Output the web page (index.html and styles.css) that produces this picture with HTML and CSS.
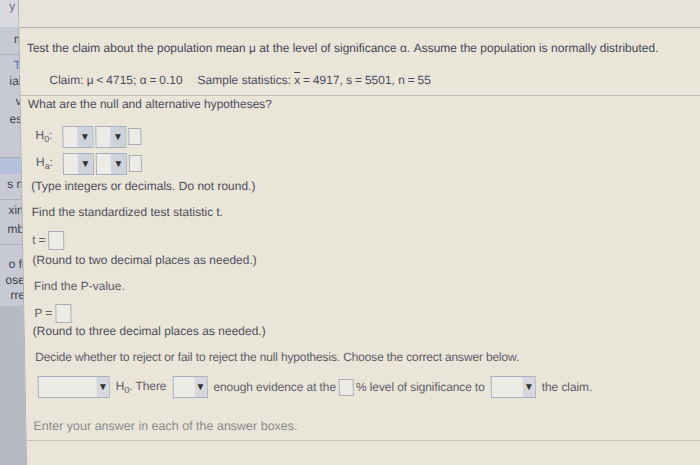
FILE: index.html
```html
<!DOCTYPE html>
<html>
<head>
<meta charset="utf-8">
<link rel="stylesheet" href="styles.css">
</head>
<body>
<div class="screen">
  <aside class="side">
    <div class="s-top">y</div>
    <div class="s-item s-a">n</div>
    <div class="s-item s-b">T</div>
    <div class="s-item s-c">ial</div>
    <div class="s-item s-d">v</div>
    <div class="s-item s-e">es</div>
    <div class="s-blue"></div>
    <div class="s-item s-f">s n</div>
    <div class="s-item s-g">xin</div>
    <div class="s-item s-h">mb</div>
    <div class="s-item s-i">o fi</div>
    <div class="s-item s-j">ose</div>
    <div class="s-item s-k">rre</div>
    <div class="s-rest"></div>
  </aside>
  <main class="main">
    <div class="topband"></div>
    <header class="qhead">
      <p class="title">Test the claim about the population mean μ at the level of significance α. Assume the population is normally distributed.</p>
      <p class="claim">Claim: μ<span class="op">&lt;</span>4715; α<span class="op">=</span>0.10<span class="gap"></span>Sample statistics: <span class="xbar">x</span><span class="op">=</span>4917, s<span class="op">=</span>5501, n<span class="op">=</span>55</p>
    </header>
    <section class="qbody">
      <p class="line l-what">What are the null and alternative hypotheses?</p>
      <div class="hyp h0">
        <span class="hlabel">H<sub>0</sub>:</span>
        <span class="sel sel-s"><span class="arr">▼</span></span>
        <span class="sel sel-s"><span class="arr">▼</span></span>
        <span class="inp"></span>
      </div>
      <div class="hyp ha">
        <span class="hlabel">H<sub>a</sub>:</span>
        <span class="sel sel-s"><span class="arr">▼</span></span>
        <span class="sel sel-s"><span class="arr">▼</span></span>
        <span class="inp"></span>
      </div>
      <p class="line l-type">(Type integers or decimals. Do not round.)</p>
      <p class="line l-find">Find the standardized test statistic t.</p>
      <div class="eq l-t"><span>t<span class="op">=</span></span><span class="inp inp-eq"></span></div>
      <p class="line l-r2">(Round to two decimal places as needed.)</p>
      <p class="line l-fp">Find the P-value.</p>
      <div class="eq l-p"><span>P<span class="op">=</span></span><span class="inp inp-eq"></span></div>
      <p class="line l-r3">(Round to three decimal places as needed.)</p>
      <p class="line l-dec">Decide whether to reject or fail to reject the null hypothesis. Choose the correct answer below.</p>
      <div class="answer">
        <span class="sel sel-w"><span class="arr">▼</span></span>
        <span class="txt">H<sub>0</sub>. There</span>
        <span class="sel sel-m"><span class="arr">▼</span></span>
        <span class="txt">enough evidence at the</span>
        <span class="inp inp-sm"></span>
        <span class="txt pct">% level of significance to</span>
        <span class="sel sel-l"><span class="arr">▼</span></span>
        <span class="txt">the claim.</span>
      </div>
      <p class="line l-enter">Enter your answer in each of the answer boxes.</p>
    </section>
    <div class="bottomline"></div>
  </main>
</div>
</body>
</html>
```

FILE: styles.css
```css
html, body {
  margin: 0;
  padding: 0;
  width: 700px;
  height: 465px;
  overflow: hidden;
  background: #e7e3d6;
}

.screen {
  display: flex;
  width: 730px;
  height: 480px;
  margin-left: -10px;
  font-family: "Liberation Sans", Arial, sans-serif;
  font-size: 12px;
  color: #4e4e5a;
  transform: skewX(1deg);
  transform-origin: 0 0;
}

.side {
  width: 28px;
  flex: none;
  background: #c7cad5;
  display: flex;
  flex-direction: column;
  overflow: hidden;
  color: #3c3f4c;
  font-size: 12px;
  border-right: 1px solid #b0b2b8;
}

.s-top {
  height: 27px;
  background: #d9dae0;
  text-align: right;
  line-height: 12px;
  color: #6a6c77;
  padding-right: 3px;
}

.s-item {
  text-align: right;
  white-space: nowrap;
  line-height: 14px;
  margin-right: -2px;
}

.s-a { margin-top: 5px; height: 22px; border-bottom: 1px solid #aeb1bb; }
.s-b { margin-top: 3px; color: #4f6aa8; }
.s-c { margin-top: 2px; }
.s-d { margin-top: 6px; }
.s-e { margin-top: 4px; }
.s-blue { height: 16px; margin-top: 31px; background: #b4c0da; border-top: 1px solid #a8acb6; }
.s-f { margin-top: 3px; }
.s-g { margin-top: 8px; border-top: 1px solid #aeb1bb; padding-top: 3px; }
.s-h { margin-top: 5px; height: 22px; border-bottom: 1px solid #aeb1bb; }
.s-i { margin-top: 12px; }
.s-j { margin-top: 2px; }
.s-k { margin-top: 1px; }
.s-rest { flex: 1; background: #b7bac2; margin-top: 4px; }

.main {
  flex: 1;
  display: flex;
  flex-direction: column;
  background: #e9e5d8;
}

.topband {
  height: 27px;
  flex: none;
  background: #e6e3da;
  border-bottom: 1px solid #b2b1ad;
}

.qhead {
  padding: 12px 0 0 7px;
  height: 55px;
  border-bottom: 1px solid #bdbcb6;
}

.qhead p { margin: 0; white-space: nowrap; }

.title {
  line-height: 16px;
  color: #454656;
  font-size: 12px;
}

.claim {
  margin-top: 16px !important;
  padding-left: 22px;
  line-height: 16px;
  font-size: 12px;
  color: #4b4c5c;
}

.op {
  margin: 0 2.8px;
}

.gap {
  display: inline-block;
  width: 15px;
}

.xbar {
  text-decoration: overline;
}

.qbody {
  padding-left: 7px;
  display: flex;
  flex-direction: column;
  align-items: flex-start;
}

.line {
  margin: 0;
  line-height: 16px;
  white-space: nowrap;
}

.l-what { margin-top: 0; color: #4a4b5a; }

.hyp {
  display: flex;
  align-items: center;
  gap: 2px;
  height: 23px;
  padding-left: 7px;
}
.h0 { margin-top: 13px; }
.ha { margin-top: 4px; }

.hlabel {
  width: 25px;
  color: #5a5a66;
}
.hlabel sub { font-size: 9px; }

.sel {
  display: inline-flex;
  justify-content: flex-end;
  align-items: stretch;
  height: 22px;
  box-sizing: border-box;
  border: 1px solid #a9afbf;
  background: #ecebe6;
}
.sel .arr {
  width: 12px;
  background: #cfd2da;
  font-size: 10px;
  line-height: 20px;
  text-align: center;
  color: #333;
}
.sel-s { width: 31px; }
.sel-s .arr { width: 15px; }

.inp {
  display: inline-block;
  width: 13px;
  height: 17px;
  box-sizing: border-box;
  border: 1px solid #a9adb8;
  background: #ecebe6;
}

.l-type { margin-top: 3px; padding-left: 2px; }
.l-find { margin-top: 10px; padding-left: 2px; }

.eq {
  display: flex;
  align-items: center;
  gap: 0;
  margin-top: 10px;
  padding-left: 2px;
  height: 20px;
  color: #5e5e68;
}
.inp-eq { width: 16px; height: 19px; }
.l-r2 { margin-top: 2px; padding-left: 2px; }
.l-fp { margin-top: 10px; padding-left: 3px; color: #5a5a64; }
.l-p { margin-top: 9px; padding-left: 3px; }
.l-r3 { margin-top: 0; padding-left: 1px; }
.l-dec { margin-top: 10px; padding-left: 3px; color: #5c5c66; letter-spacing: -0.15px; }

.answer {
  display: flex;
  align-items: center;
  gap: 6px;
  margin-top: 10px;
  padding-left: 5px;
  height: 24px;
  color: #5e5e68;
  white-space: nowrap;
  letter-spacing: -0.1px;
}
.answer .sel .arr { background: #d6d8de; }
.sel-w { width: 72px; }
.sel-m { width: 35px; }
.sel-l { width: 45px; }
.inp-sm { width: 15px; height: 17px; margin-left: -3px; }
.pct { margin-left: -4px; }
.answer sub { font-size: 9px; }

.l-enter {
  margin-top: 19px;
  padding-left: 0;
  color: #8a8a8e;
  font-size: 12.5px;
}

.bottomline {
  margin-top: 6px;
  border-top: 1px solid #c6c3b8;
}
```
